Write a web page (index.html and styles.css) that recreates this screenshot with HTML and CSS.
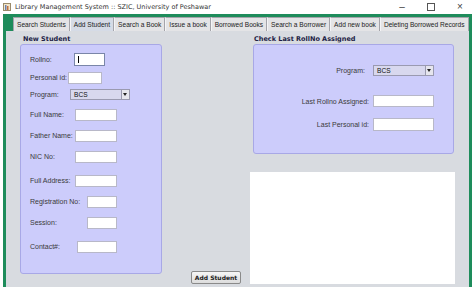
FILE: index.html
```html
<!DOCTYPE html>
<html lang="en">
<head>
    <meta charset="UTF-8">
    <title>Library Management System :: SZIC, University of Peshawar</title>
    <link rel="stylesheet" href="styles.css">
</head>
<body>
    <div class="titlebar">
        <svg class="app-icon" width="8" height="8" viewBox="0 0 8 8">
            <rect x="0.5" y="0.5" width="7" height="7" fill="#f4e6c8" stroke="#9a8a6a"/>
            <rect x="2" y="2" width="1.5" height="5" fill="#6a7fb0"/>
            <rect x="4" y="3" width="1.5" height="4" fill="#c07040"/>
        </svg>
        <span class="title">Library Management System :: SZIC, University of Peshawar</span>
        <div class="controls">
            <span class="ctl">&#8211;</span>
            <span class="ctl max"></span>
            <span class="ctl">&#215;</span>
        </div>
    </div>

    <div class="frame">
        <div class="tabs">
            <div class="tab">Search Students</div>
            <div class="tab active">Add Student</div>
            <div class="tab">Search a Book</div>
            <div class="tab">Issue a book</div>
            <div class="tab">Borrowed Books</div>
            <div class="tab">Search a Borrower</div>
            <div class="tab">Add new book</div>
            <div class="tab">Deleting Borrowed Records</div>
        </div>

        <div class="content">
            <div class="col-left">
                <div class="group-title">New Student</div>
                <div class="panel student">
                    <div class="row r-roll"><span class="lbl">Rollno:</span><div class="field focus w31"></div></div>
                    <div class="row r-pid"><span class="lbl">Personal id:</span><div class="field w34"></div></div>
                    <div class="row r-prog"><span class="lbl">Program:</span><div class="select w60"><span>BCS</span><i class="arrow"></i></div></div>
                    <div class="row r-name"><span class="lbl">Full Name:</span><div class="field w42"></div></div>
                    <div class="row r-father"><span class="lbl">Father Name:</span><div class="field w42"></div></div>
                    <div class="row r-nic"><span class="lbl">NIC No:</span><div class="field w42"></div></div>
                    <div class="row r-addr"><span class="lbl">Full Address:</span><div class="field w42"></div></div>
                    <div class="row r-reg"><span class="lbl">Registration No:</span><div class="field w30"></div></div>
                    <div class="row r-sess"><span class="lbl">Session:</span><div class="field w30"></div></div>
                    <div class="row r-contact"><span class="lbl">Contact#:</span><div class="field w40"></div></div>
                </div>
            </div>

            <div class="col-mid">
                <button class="btn">Add Student</button>
            </div>

            <div class="col-right">
                <div class="group-title">Check Last RollNo Assigned</div>
                <div class="panel check">
                    <div class="crow c-prog"><span class="clbl">Program:</span><div class="select w61"><span>BCS</span><i class="arrow"></i></div></div>
                    <div class="crow c-roll"><span class="clbl">Last Rollno Assigned:</span><div class="field w61"></div></div>
                    <div class="crow c-pid"><span class="clbl">Last Personal id:</span><div class="field w61"></div></div>
                </div>
                <div class="output"></div>
            </div>
        </div>
    </div>
</body>
</html>
```

FILE: styles.css
```css
body {
    margin: 0;
    width: 474px;
    height: 287px;
    overflow: hidden;
    background: #ffffff;
    font-family: "Liberation Sans", Arial, sans-serif;
    font-size: 7px;
    color: #2a2a2a;
}

.titlebar {
    height: 14px;
    display: flex;
    align-items: center;
    padding-left: 3px;
    background: #ffffff;
}

.app-icon {
    margin-right: 4px;
}

.title {
    font-family: "DejaVu Sans", sans-serif;
    font-size: 6.5px;
    color: #333;
}

.controls {
    margin-left: auto;
    display: flex;
    align-items: center;
}

.ctl {
    width: 28px;
    text-align: center;
    font-size: 10px;
    color: #444;
    line-height: 10px;
}

.ctl.max {
    width: 6px;
    height: 6px;
    border: 1px solid #555;
    margin: 0 11px;
}

.frame {
    margin: 0 2px 0 3px;
    border: 3px solid #1e8c5b;
    border-bottom: none;
    height: 270px;
    background: #1e8c5b;
}

.tabs {
    display: flex;
    padding: 0 0 0 7px;
    height: 14px;
    background: #1e8c5b;
}

.tab {
    height: 13px;
    line-height: 13px;
    padding: 0 3px;
    background: #e4e4e6;
    border: 1px solid #a4a4aa;
    border-bottom: none;
    font-size: 6.6px;
    color: #222;
    white-space: nowrap;
}

.tab + .tab {
    border-left: 1px solid #f4f4f6;
}

.tab.active {
    background: #d5dbe6;
}

.content {
    height: 256px;
    background: #d8dbe0;
    display: flex;
    padding-left: 14px;
    overflow: hidden;
}

.group-title {
    font-family: "DejaVu Sans", sans-serif;
    font-weight: bold;
    font-size: 6.5px;
    color: #1c1c44;
    height: 10px;
    line-height: 10px;
    margin: 3px 0 0 3px;
}

.panel {
    background: #ccccfb;
    border: 1px solid #a8a8e6;
    border-radius: 3px;
    box-sizing: border-box;
}

.col-left {
    width: 142px;
}

.student {
    height: 230px;
    padding: 8px 0 0 9px;
}

.row {
    display: flex;
    align-items: center;
    height: 13px;
}

.lbl {
    color: #3a3a3a;
}

.field {
    height: 12px;
    background: #ffffff;
    border: 1px solid #b8b8c8;
    box-sizing: border-box;
}

.field.focus {
    border-color: #7a86a8;
    height: 13px;
    position: relative;
}

.field.focus::after {
    content: "";
    position: absolute;
    left: 3px;
    top: 2px;
    width: 1px;
    height: 7px;
    background: #000;
}

.w30 { width: 30px; }
.w31 { width: 31px; }
.w34 { width: 34px; }
.w40 { width: 40px; }
.w42 { width: 42px; }
.w60 { width: 60px; }
.w61 { width: 61px; }

.select {
    height: 11px;
    background: #d8d8ee;
    border: 1px solid #9a9ab0;
    box-sizing: border-box;
    display: flex;
    align-items: center;
    padding-left: 3px;
    font-size: 6.6px;
    color: #111;
}

.arrow {
    margin-left: auto;
    width: 7px;
    height: 9px;
    background: #e6e6ee;
    border-left: 1px solid #9a9ab0;
    position: relative;
}

.arrow::after {
    content: "";
    position: absolute;
    left: 1px;
    top: 3px;
    border-left: 2.5px solid transparent;
    border-right: 2.5px solid transparent;
    border-top: 3px solid #222;
}

.r-roll .lbl { width: 44px; }
.r-pid { margin-top: 5px; }
.r-pid .lbl { width: 38px; }
.r-prog { margin-top: 4px; }
.r-prog .lbl { width: 40px; }
.r-name { margin-top: 7px; }
.r-name .lbl { width: 45px; }
.r-father { margin-top: 8px; }
.r-father .lbl { width: 45px; }
.r-nic { margin-top: 8px; }
.r-nic .lbl { width: 45px; }
.r-addr { margin-top: 11px; }
.r-addr .lbl { width: 45px; }
.r-reg { margin-top: 8px; }
.r-reg .lbl { width: 57px; }
.r-sess { margin-top: 8px; }
.r-sess .lbl { width: 57px; }
.r-contact { margin-top: 11px; }
.r-contact .lbl { width: 47px; }

.col-mid {
    width: 88px;
    display: flex;
    align-items: flex-end;
    padding-bottom: 3px;
    box-sizing: border-box;
}

.btn {
    margin-left: 29px;
    width: 50px;
    height: 13px;
    padding: 0;
    font-family: "DejaVu Sans", sans-serif;
    font-weight: bold;
    font-size: 6px;
    color: #222;
    background: linear-gradient(#f6f6f6, #dcdcdc);
    border: 1px solid #8a8a8a;
    border-radius: 2px;
}

.col-right {
    width: 205px;
}

.col-right .group-title {
    margin-left: 4px;
}

.check {
    margin-left: 3px;
    width: 201px;
    height: 110px;
    padding-top: 19px;
}

.crow {
    display: flex;
    align-items: center;
    height: 12px;
}

.clbl {
    width: 115px;
    text-align: right;
    padding-right: 4px;
    color: #3a3a3a;
}

.c-prog .clbl { width: 111px; padding-right: 8px; }
.c-roll { margin-top: 19px; }
.c-pid { margin-top: 11px; height: 13px; }
.c-pid .field { height: 13px; }

.output {
    margin-top: 18px;
    width: 205px;
    height: 112px;
    background: #ffffff;
}
```
